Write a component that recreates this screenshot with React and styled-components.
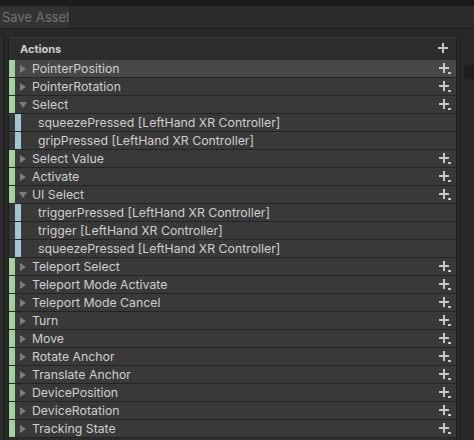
import React from 'react'
import styled, { createGlobalStyle } from 'styled-components'

const GlobalStyle = createGlobalStyle`
  html, body {
    margin: 0;
    padding: 0;
    background: #282828;
    font-family: Inter, "Noto Sans", sans-serif;
    overflow: hidden;
  }
`

const actions = [
  { name: 'PointerPosition', selected: true },
  { name: 'PointerRotation' },
  { name: 'Select', open: true, bindings: ['squeezePressed [LeftHand XR Controller]', 'gripPressed [LeftHand XR Controller]'] },
  { name: 'Select Value' },
  { name: 'Activate' },
  {
    name: 'UI Select',
    open: true,
    bindings: [
      'triggerPressed [LeftHand XR Controller]',
      'trigger [LeftHand XR Controller]',
      'squeezePressed [LeftHand XR Controller]',
    ],
  },
  { name: 'Teleport Select' },
  { name: 'Teleport Mode Activate' },
  { name: 'Teleport Mode Cancel' },
  { name: 'Turn' },
  { name: 'Move' },
  { name: 'Rotate Anchor' },
  { name: 'Translate Anchor' },
  { name: 'DevicePosition' },
  { name: 'DeviceRotation' },
  { name: 'Tracking State' },
]

function PlusIcon({ more }) {
  return (
    <svg width="14" height="14" viewBox="0 0 14 14">
      <rect x="1" y="5" width="10" height="2" fill="#c8c8c8" />
      <rect x="5" y="1" width="2" height="10" fill="#c8c8c8" />
      {more ? <rect x="10" y="10" width="3" height="2" fill="#c8c8c8" /> : null}
    </svg>
  )
}

function Arrow({ open }) {
  return (
    <svg width="8" height="8" viewBox="0 0 8 8">
      {open ? <polygon points="0,1 8,1 4,7" fill="#7d7d7d" /> : <polygon points="1,0 7,4 1,8" fill="#7d7d7d" />}
    </svg>
  )
}

export default function App() {
  return (
    <Page>
      <GlobalStyle />
      <TopStrip />
      <Toolbar>
        <SaveButton>Save Asset</SaveButton>
      </Toolbar>
      <Body>
        <LeftEdge />
        <Panel>
          <Header>
            <span>Actions</span>
            <PlusIcon />
          </Header>
          {actions.map((a) => (
            <React.Fragment key={a.name}>
              <Row $selected={a.selected}>
                <Tag $kind="action" />
                <Arrow open={a.open} />
                <Label>{a.name}</Label>
                <PlusIcon more />
              </Row>
              {a.bindings
                ? a.bindings.map((b, i) => (
                    <Row key={i} $binding>
                      <Tag $kind="binding" />
                      <Label $indent>{b}</Label>
                    </Row>
                  ))
                : null}
            </React.Fragment>
          ))}
        </Panel>
        <RightEdge>
          <MiniBox />
        </RightEdge>
      </Body>
    </Page>
  )
}

const Page = styled.div`
  width: 474px;
  height: 440px;
  display: flex;
  flex-direction: column;
  background: #282828;
`

const TopStrip = styled.div`
  height: 6px;
  background: #1b1b1b;
`

const Toolbar = styled.div`
  height: 22px;
  display: flex;
  align-items: stretch;
  background: #2b2b2b;
  border-bottom: 1px solid #1c1c1c;
`

const SaveButton = styled.div`
  width: 70px;
  display: flex;
  align-items: center;
  padding-left: 2px;
  box-sizing: border-box;
  white-space: nowrap;
  overflow: hidden;
  background: #333333;
  border-right: 1px solid #242424;
  color: #747474;
  font-size: 13px;
`

const Body = styled.div`
  flex: 1;
  display: flex;
  padding-top: 8px;
  min-height: 0;
`

const LeftEdge = styled.div`
  width: 3px;
  border-right: 1px solid #1c1c1c;
  background: #2f2f2f;
  margin-right: 4px;
`

const Panel = styled.div`
  width: 454px;
  display: flex;
  flex-direction: column;
  border-top: 1px solid #3a3a3a;
  border-left: 1px solid #1f1f1f;
  border-right: 1px solid #1f1f1f;
  background: #2d2d2d;
`

const Header = styled.div`
  height: 22px;
  flex-shrink: 0;
  display: flex;
  align-items: center;
  justify-content: space-between;
  padding: 0 5px 0 11px;
  color: #d0d0d0;
  font-size: 11px;
  font-weight: 700;
`

const Row = styled.div`
  height: 17px;
  flex-shrink: 0;
  display: flex;
  align-items: center;
  gap: 5px;
  padding-right: 4px;
  background: ${(p) => (p.$selected ? '#474747' : '#393939')};
  border-bottom: 1px solid #242424;
  color: #d0d0d0;
  font-size: 12.3px;
`

const Tag = styled.div`
  align-self: stretch;
  width: 6px;
  margin-left: ${(p) => (p.$kind === 'binding' ? '6px' : '0')};
  margin-right: ${(p) => (p.$kind === 'binding' ? '0' : '-1px')};
  background: ${(p) => (p.$kind === 'binding' ? '#a2c6d6' : '#9fd39b')};
`

const Label = styled.span`
  flex: 1;
  white-space: nowrap;
  padding-left: ${(p) => (p.$indent ? '12px' : '0')};
`

const RightEdge = styled.div`
  flex: 1;
  margin-left: 3px;
  border-left: 1px solid #1f1f1f;
  padding-top: 28px;
`

const MiniBox = styled.div`
  width: 10px;
  height: 14px;
  margin-left: 3px;
  background: #1e1e1e;
`
